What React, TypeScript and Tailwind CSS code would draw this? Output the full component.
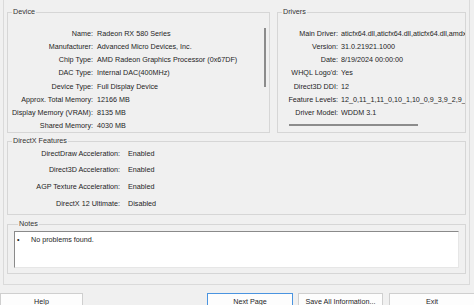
const device: [string, string][] = [
  ['Name:', 'Radeon RX 580 Series'],
  ['Manufacturer:', 'Advanced Micro Devices, Inc.'],
  ['Chip Type:', 'AMD Radeon Graphics Processor (0x67DF)'],
  ['DAC Type:', 'Internal DAC(400MHz)'],
  ['Device Type:', 'Full Display Device'],
  ['Approx. Total Memory:', '12166 MB'],
  ['Display Memory (VRAM):', '8135 MB'],
  ['Shared Memory:', '4030 MB'],
  ['Current Display Mode:', '1920 x 1080 (32 bit) (60Hz)'],
  ['HDR Support:', 'Not Supported'],
];

const drivers: [string, string][] = [
  ['Main Driver:', 'aticfx64.dll,aticfx64.dll,aticfx64.dll,amdxn64.dll'],
  ['Version:', '31.0.21921.1000'],
  ['Date:', '8/19/2024 00:00:00'],
  ['WHQL Logo\'d:', 'Yes'],
  ['Direct3D DDI:', '12'],
  ['Feature Levels:', '12_0,11_1,11_0,10_1,10_0,9_3,9_2,9_1'],
  ['Driver Model:', 'WDDM 3.1'],
];

const features: [string, string][] = [
  ['DirectDraw Acceleration:', 'Enabled'],
  ['Direct3D Acceleration:', 'Enabled'],
  ['AGP Texture Acceleration:', 'Enabled'],
  ['DirectX 12 Ultimate:', 'Disabled'],
];

function Legend({ children }: { children: string }) {
  return <legend className="ml-[4px] px-[1px] leading-[10px] text-[#333]">{children}</legend>;
}

function Button({ label, width, focused }: { label: string; width: string; focused?: boolean }) {
  return (
    <button
      type="button"
      className={`${width} h-[22px] shrink-0 pt-[3px] flex justify-center items-start bg-[#fdfdfd] border ${
        focused ? 'border-[#4a94e0]' : 'border-[#cfcfcf]'
      }`}
    >
      <span className="leading-[10px]">{label}</span>
    </button>
  );
}

export default function App() {
  return (
    <div
      className="w-[474px] h-[305px] overflow-hidden bg-[#f0f0f0] text-[7.2px] text-[#1e1e1e]"
      style={{ fontFamily: '"Liberation Sans", Arial, sans-serif' }}
    >
      <div className="ml-[3px] w-[467px] pt-[7px] px-[3px] pb-[10px] border-x border-b border-[#dadada]">
        <div className="flex gap-[7px]">
          {/* Device */}
          <fieldset className="w-[263px] border border-[#d6d6d6]">
            <Legend>Device</Legend>
            <div className="relative mt-[11px] h-[104px] overflow-hidden">
              <div className="grid grid-cols-[85px_1fr] gap-x-[4px] auto-rows-[13.1px] items-center">
                {device.map(([k, v]) => (
                  <div key={k} className="contents">
                    <span className="text-right whitespace-nowrap">{k}</span>
                    <span className="whitespace-nowrap">{v}</span>
                  </div>
                ))}
              </div>
              <div className="absolute right-[3px] top-0 w-[2px] h-[59px] bg-[#8c8c8c]" />
            </div>
          </fieldset>

          {/* Drivers */}
          <fieldset className="w-[189px] border border-[#d6d6d6]">
            <Legend>Drivers</Legend>
            <div className="relative mt-[11px] h-[104px] overflow-hidden">
              <div className="grid grid-cols-[60px_1fr] gap-x-[3px] auto-rows-[13.1px] items-center">
                {drivers.map(([k, v]) => (
                  <div key={k} className="contents">
                    <span className="text-right whitespace-nowrap">{k}</span>
                    <span className="whitespace-nowrap overflow-hidden">{v}</span>
                  </div>
                ))}
              </div>
              <div className="absolute left-[11px] top-[96px] w-[129px] h-[2px] bg-[#8c8c8c]" />
            </div>
          </fieldset>
        </div>

        {/* DirectX Features */}
        <fieldset className="mt-[3px] pb-[2px] border border-[#d6d6d6]">
          <Legend>DirectX Features</Legend>
          <div className="grid grid-cols-[112px_1fr] gap-x-[8px] auto-rows-[16.6px] items-center">
            {features.map(([k, v]) => (
              <div key={k} className="contents">
                <span className="text-right whitespace-nowrap">{k}</span>
                <span>{v}</span>
              </div>
            ))}
          </div>
        </fieldset>

        {/* Notes */}
        <fieldset className="mt-[4px] px-[6px] pb-[5px] border border-[#d6d6d6]">
          <Legend>Notes</Legend>
          <div className="mt-[2px] h-[37px] bg-white border-t border-l border-t-[#8a8a8a] border-l-[#8a8a8a] border-r border-b border-r-[#e6e6e6] border-b-[#e6e6e6] pt-[3px] pl-[2px] flex items-start leading-[10px]">
            <span className="w-[14px]">•</span>
            <span>No problems found.</span>
          </div>
        </fieldset>
      </div>

      {/* Buttons */}
      <div className="mt-[8px] flex">
        <Button label="Help" width="w-[83px]" />
        <div className="ml-[124px] flex">
          <Button label="Next Page" width="w-[86px]" focused />
          <div className="ml-[5px]">
            <Button label="Save All Information..." width="w-[85px]" />
          </div>
          <div className="ml-[6px]">
            <Button label="Exit" width="w-[86px]" />
          </div>
        </div>
      </div>
    </div>
  );
}
